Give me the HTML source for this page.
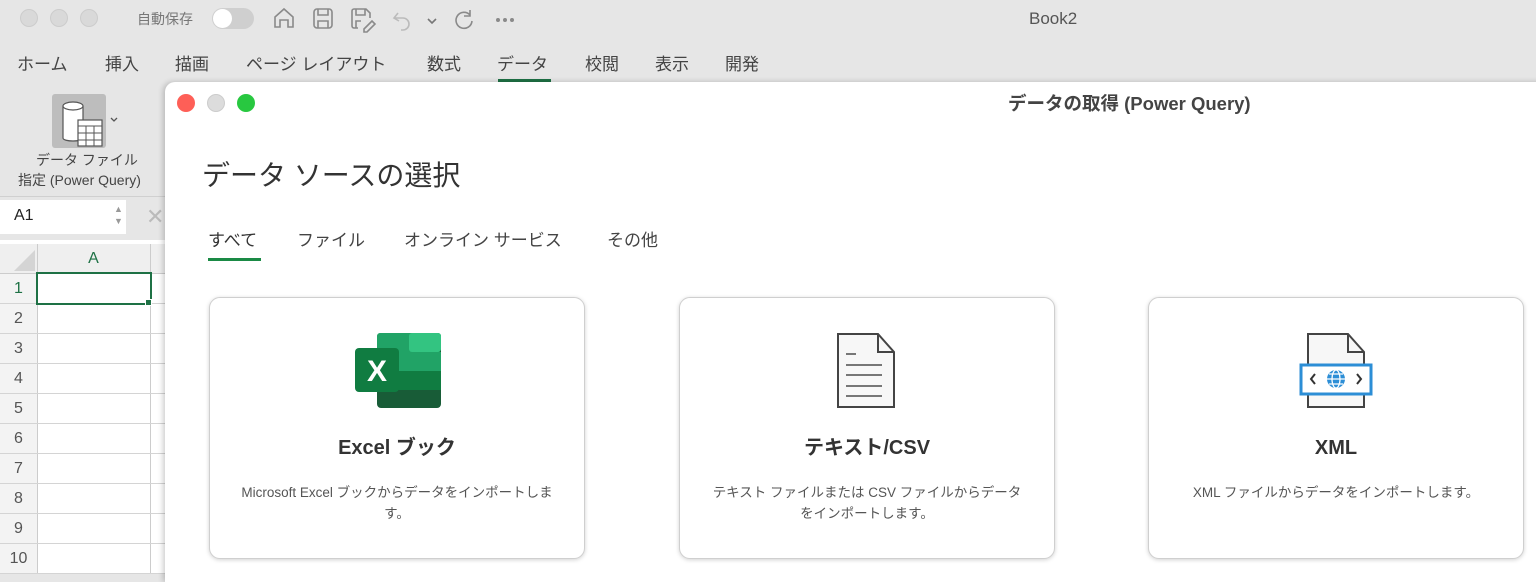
<!DOCTYPE html>
<html><head><meta charset="utf-8">
<style>
*{margin:0;padding:0;box-sizing:border-box}
body{width:1536px;height:574px;overflow:hidden;position:relative;background:#e6e6e6;font-family:"Liberation Sans","Noto Sans CJK JP",sans-serif;color:#333}
.a{position:absolute;white-space:nowrap}
.dot{position:absolute;width:18px;height:18px;border-radius:50%}
.tab{position:absolute;top:50px;font-size:17px;color:#444}
.row{position:absolute;left:0;width:165px;height:30px;border-bottom:1px solid #d4d4d4;}
.rn{position:absolute;left:0;width:37px;text-align:center;font-size:16px;color:#555;line-height:30px}
.card{position:absolute;top:297px;width:376px;height:262px;background:#fff;border:1px solid #cfcfcf;border-radius:11px;box-shadow:0 1px 4px rgba(0,0,0,.18)}
.ct{position:absolute;top:136px;width:100%;text-align:center;font-size:20px;line-height:28px;font-weight:bold;color:#333}
.cd{position:absolute;top:184px;left:22px;right:22px;text-align:center;font-size:13.5px;line-height:21px;color:#555;white-space:normal}
</style></head><body>
<div class="dot" style="left:20px;top:9px;background:#d9d9d9;border:1px solid #ccc"></div>
<div class="dot" style="left:50px;top:9px;background:#d9d9d9;border:1px solid #ccc"></div>
<div class="dot" style="left:80px;top:9px;background:#d9d9d9;border:1px solid #ccc"></div>
<div class="a" style="left:137px;top:9px;font-size:14px;color:#777">自動保存</div>
<div class="a" style="left:212px;top:8px;width:42px;height:21px;border-radius:11px;background:#cfcfcf"><div style="position:absolute;left:1px;top:1px;width:19px;height:19px;border-radius:50%;background:#fff"></div></div>
<svg class="a" style="left:270px;top:5px" width="250" height="28" fill="none" stroke="#8a8a8a" stroke-width="1.6">
<path d="M5 22V12l9-8 9 8v10h-5v-7h-8v7z"/>
<rect x="44" y="4" width="18" height="19" rx="3"/><path d="M48 4v6h10V4M48 23v-7h10v7"/>
<path d="M88 23h-4a2 2 0 0 1-2-2V6a2 2 0 0 1 2-2h12l4 4v5M86 4v6h9V4M86 23v-7h5"/><path d="M94 24l8-8 3 3-8 8h-3z"/>
<path d="M128 8l-4 5 5 3M124 13h9a6 6 0 0 1 0 12h-2" stroke="#bbb"/>
<path d="M158 14l4 4 4-4" stroke="#777"/>
<path d="M200 10a8 8 0 1 0 2 6M200 5v6h-6"/>
<circle cx="228" cy="15" r="1.2" fill="#888"/><circle cx="235" cy="15" r="1.2" fill="#888"/><circle cx="242" cy="15" r="1.2" fill="#888"/>
</svg>
<div class="a" style="left:1029px;top:9px;font-size:17px;color:#555">Book2</div>
<div class="tab" style="left:17px">ホーム</div>
<div class="tab" style="left:105px">挿入</div>
<div class="tab" style="left:175px">描画</div>
<div class="tab" style="left:246px">ページ レイアウト</div>
<div class="tab" style="left:427px">数式</div>
<div class="tab" style="left:497px">データ</div>
<div class="a" style="left:498px;top:79px;width:53px;height:3px;background:#1e7145"></div>
<div class="tab" style="left:585px">校閲</div>
<div class="tab" style="left:655px">表示</div>
<div class="tab" style="left:725px">開発</div>
<div class="a" style="left:52px;top:94px;width:54px;height:54px;background:#bdbdbd;border-radius:3px"></div>
<svg class="a" style="left:52px;top:94px" width="80" height="56" fill="none">
<path d="M11 12v32c0 4 20 4 20 0V12" fill="#fff" stroke="#555" stroke-width="1.2"/><ellipse cx="21" cy="12" rx="10" ry="4" fill="#fff" stroke="#555" stroke-width="1.2"/>
<rect x="26" y="26" width="24" height="26" fill="#fff" stroke="#555" stroke-width="1.2"/><path d="M26 32h24M26 39h24M26 46h24M34 32v20M42 32v20" stroke="#555"/>
<path d="M59 24l3 3 3-3" stroke="#555" stroke-width="1.3"/></svg>
<div class="a" style="left:36px;top:150px;font-size:14px;color:#444">データ ファイル</div>
<div class="a" style="left:18px;top:170px;font-size:14px;color:#444">指定 (Power Query)</div>
<div class="a" style="left:0;top:196px;width:165px;height:1px;background:#d0d0d0"></div>
<div class="a" style="left:0;top:200px;width:126px;height:34px;background:#fff"></div>
<div class="a" style="left:14px;top:207px;font-size:16px;color:#222">A1</div>
<div class="a" style="left:114px;top:203px;font-size:9px;color:#999;line-height:12px">▲<br>▼</div>
<div class="a" style="left:146px;top:204px;font-size:22px;color:#bbb">✕</div>
<div class="a" style="left:0;top:240px;width:165px;height:334px;background:#fff"></div>
<div class="a" style="left:0;top:244px;width:165px;height:30px;background:#efefef;border-bottom:1px solid #ccc"></div>
<svg class="a" style="left:14px;top:250px" width="22" height="22"><path d="M21 0V21H0z" fill="#d4d4d4"/></svg>
<div class="a" style="left:37px;top:244px;width:113px;text-align:center;font-size:16px;color:#1e7145;line-height:30px">A</div>
<div class="a" style="left:0;top:274px;width:37px;height:300px;background:#f3f3f3"></div>
<div class="a" style="left:37px;top:244px;width:1px;height:330px;background:#ccc"></div>
<div class="a" style="left:150px;top:244px;width:1px;height:330px;background:#ccc"></div>
<div class="row" style="top:274px"><div class="rn" style="color:#1e7145">1</div></div>
<div class="row" style="top:304px"><div class="rn">2</div></div>
<div class="row" style="top:334px"><div class="rn">3</div></div>
<div class="row" style="top:364px"><div class="rn">4</div></div>
<div class="row" style="top:394px"><div class="rn">5</div></div>
<div class="row" style="top:424px"><div class="rn">6</div></div>
<div class="row" style="top:454px"><div class="rn">7</div></div>
<div class="row" style="top:484px"><div class="rn">8</div></div>
<div class="row" style="top:514px"><div class="rn">9</div></div>
<div class="row" style="top:544px"><div class="rn">10</div></div>
<div class="a" style="left:36px;top:272px;width:116px;height:33px;border:2px solid #1e7145"></div>
<div class="a" style="left:145px;top:299px;width:7px;height:7px;background:#1e7145;border:1px solid #fff"></div>
<div class="a" style="left:165px;top:82px;width:1380px;height:500px;background:#fff;border-radius:10px 0 0 0;box-shadow:-2px 0 6px rgba(0,0,0,.2)"></div>
<div class="dot" style="left:177px;top:94px;background:#fe5f57"></div>
<div class="dot" style="left:207px;top:94px;background:#dcdcdc;border:1px solid #ccc"></div>
<div class="dot" style="left:237px;top:94px;background:#28c840"></div>
<div class="a" style="left:1008px;top:90px;font-size:18.5px;font-weight:bold;color:#444">データの取得 (Power Query)</div>
<div class="a" style="left:202px;top:154px;font-size:28px;color:#333">データ ソースの選択</div>
<div class="a" style="left:208px;top:226px;font-size:17px;color:#333">すべて</div>
<div class="a" style="left:208px;top:258px;width:53px;height:3px;background:#1a8a45"></div>
<div class="a" style="left:297px;top:226px;font-size:17px;color:#444">ファイル</div>
<div class="a" style="left:404px;top:226px;font-size:17px;color:#444">オンライン サービス</div>
<div class="a" style="left:607px;top:226px;font-size:17px;color:#444">その他</div>
<div class="card" style="left:209px">
<svg class="a" style="left:145px;top:35px" width="86" height="75">
<rect x="22" y="0" width="64" height="75" rx="4" fill="#185c37"/>
<rect x="22" y="0" width="64" height="19" fill="#21a366" rx="3"/><rect x="54" y="0" width="32" height="19" fill="#33c481" rx="3"/>
<rect x="22" y="19" width="32" height="19" fill="#21a366"/><rect x="54" y="19" width="32" height="19" fill="#21a366"/>
<rect x="22" y="38" width="64" height="19" fill="#107c41"/>
<rect x="0" y="15" width="44" height="44" rx="4" fill="#107c41"/>
<text x="22" y="48" font-family="Liberation Sans" font-weight="bold" font-size="30" fill="#fff" text-anchor="middle">X</text></svg>
<div class="ct">Excel ブック</div>
<div class="cd" style="left:26px;right:26px">Microsoft Excel ブックからデータをインポートします。</div></div>
<div class="card" style="left:679px">
<svg class="a" style="left:156px;top:35px" width="60" height="75" fill="none" stroke="#444" stroke-width="2">
<path d="M2 1h40l16 18v55H2z" fill="#f7f7f7"/><path d="M42 1v18h16"/>
<path d="M10 21h10M10 32h36M10 42h36M10 53h36M10 63h36" stroke="#777" stroke-width="2"/></svg>
<div class="ct">テキスト/CSV</div>
<div class="cd" style="left:26px;right:26px">テキスト ファイルまたは CSV ファイルからデータをインポートします。</div></div>
<div class="card" style="left:1148px">
<svg class="a" style="left:150px;top:35px" width="74" height="75" fill="none">
<path d="M9 1h40l16 18v55H9z" fill="#f7f7f7" stroke="#444" stroke-width="2"/><path d="M49 1v18h16" stroke="#444" stroke-width="2"/>
<rect x="2" y="32" width="70" height="29" fill="#fff" stroke="#2c8ed6" stroke-width="3"/>
<path d="M16 41l-4 5 4 5M58 41l4 5-4 5" stroke="#333" stroke-width="2"/>
<circle cx="37" cy="46" r="9" fill="#2c8ed6"/><ellipse cx="37" cy="46" rx="4" ry="9" stroke="#fff" stroke-width="1.3"/><path d="M28 46h18M30 41h14M30 51h14" stroke="#fff" stroke-width="1.2"/></svg>
<div class="ct">XML</div>
<div class="cd">XML ファイルからデータをインポートします。</div></div>
</body></html>
